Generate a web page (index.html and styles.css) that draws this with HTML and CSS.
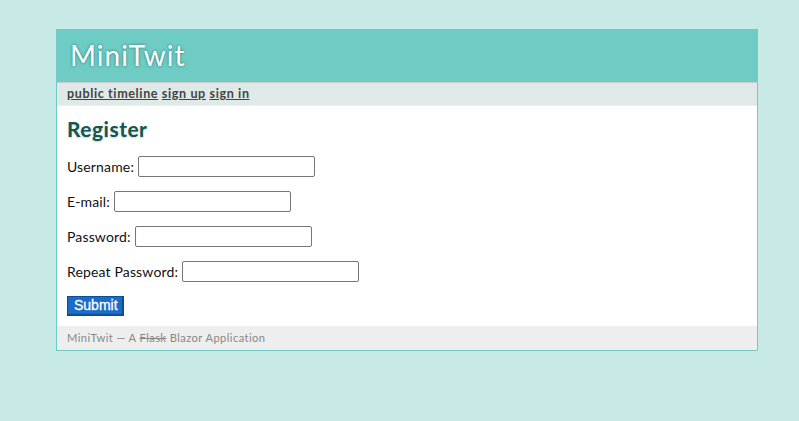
FILE: index.html
```html
<!DOCTYPE html>
<html>
	<head>
		<meta charset="utf-8" />
		<title>Register | MiniTwit</title>
		<link rel="stylesheet" href="styles.css">
	</head>
	<body>
		<div class="page">
			<h1>MiniTwit</h1>
			<div class="navigation">
				<a href="#">public timeline</a>
				<a href="#">sign up</a>
				<a href="#">sign in</a>
			</div>
			<div class="body">
				<h2>Register</h2>
				<form>
					<p><span>Username:</span> <input type="text" name="username"></p>
					<p><span>E-mail:</span> <input type="text" name="email"></p>
					<p><span>Password:</span> <input type="password" name="password"></p>
					<p><span>Repeat Password:</span> <input type="password" name="password2"></p>
					<div class="actions"><button type="submit">Submit</button></div>
				</form>
			</div>
			<div class="footer">MiniTwit &mdash; A <del>Flask</del> Blazor Application</div>
		</div>
	</body>
</html>
```

FILE: styles.css
```css
body {
	margin: 0;
	background: #c8eae7;
	font-family: Lato, "DejaVu Sans", sans-serif;
	font-size: 14px;
	color: #111;
}

.page {
	width: 700px;
	margin: 29px 0 0 56px;
	background: #fff;
	border: 1px solid #6eccc4;
	border-top: 0;
}

.page h1 {
	margin: 0;
	padding: 10px 13px;
	background: #6eccc4;
	color: #fff;
	font-size: 28px;
	line-height: 33px;
	font-weight: normal;
	letter-spacing: 1px;
	text-shadow: 0 0 3px #24776f;
}

.navigation {
	background: #dee9e8;
	padding: 4px 10px;
	border-top: 1px solid #ccc;
	border-bottom: 1px solid #eee;
	font-size: 12.6px;
	line-height: 14px;
	font-weight: bold;
	letter-spacing: 0.6px;
	color: #888;
}

.navigation a {
	color: #444;
}

.body {
	padding: 10px;
}

.body h2 {
	margin: 0 0 15px 0;
	color: #105751;
	font-size: 21px;
	line-height: 25px;
	letter-spacing: 0.5px;
	text-shadow: 0 1px 2px #ccc;
}

.body p {
	display: flex;
	align-items: center;
	gap: 4px;
	height: 21px;
	margin: 0 0 14px 0;
	letter-spacing: 0.15px;
}

.body input {
	box-sizing: border-box;
	width: 177px;
	height: 21px;
	border: 1px solid #767676;
	border-radius: 2px;
	padding: 1px 2px;
	font-size: 13px;
}

.actions button {
	display: block;
	box-sizing: border-box;
	font-family: "Liberation Sans", Arial, sans-serif;
	font-size: 14px;
	color: #fff;
	background: #1a6cc7;
	border: 1px solid #0c4d99;
	border-right-width: 2px;
	border-bottom-width: 2px;
	padding: 0 6px;
	width: 57px;
	height: 20px;
	line-height: 17px;
	-webkit-text-stroke: 0.3px #fff;
}

.footer {
	background: #eee;
	color: #888;
	padding: 5px 10px;
	font-size: 11.2px;
	line-height: 14px;
	letter-spacing: 0.4px;
}
```
